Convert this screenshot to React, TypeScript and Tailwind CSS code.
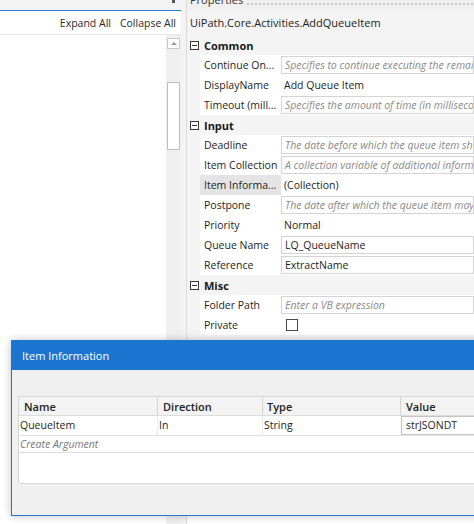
import React from "react";

type Row =
  | { kind: "cat"; label: string }
  | { kind: "prop"; label: string; value?: string; placeholder?: string; box?: boolean; selected?: boolean; check?: boolean };

const rows: Row[] = [
  { kind: "cat", label: "Common" },
  { kind: "prop", label: "Continue On...", placeholder: "Specifies to continue executing the remaining activities", box: true },
  { kind: "prop", label: "DisplayName", value: "Add Queue Item" },
  { kind: "prop", label: "Timeout (mill...", placeholder: "Specifies the amount of time (in milliseconds)", box: true },
  { kind: "cat", label: "Input" },
  { kind: "prop", label: "Deadline", placeholder: "The date before which the queue item should be", box: true },
  { kind: "prop", label: "Item Collection", placeholder: "A collection variable of additional information", box: true },
  { kind: "prop", label: "Item Informa...", value: "(Collection)", selected: true },
  { kind: "prop", label: "Postpone", placeholder: "The date after which the queue item may be", box: true },
  { kind: "prop", label: "Priority", value: "Normal" },
  { kind: "prop", label: "Queue Name", value: "LQ_QueueName", box: true },
  { kind: "prop", label: "Reference", value: "ExtractName", box: true },
  { kind: "cat", label: "Misc" },
  { kind: "prop", label: "Folder Path", placeholder: "Enter a VB expression", box: true },
  { kind: "prop", label: "Private", check: true },
];

function MinusBox() {
  return (
    <div className="w-[9px] h-[9px] border border-[#3a3a3a] flex items-center justify-center bg-white">
      <div className="w-[5px] h-[1px] bg-[#3a3a3a]" />
    </div>
  );
}

export default function App() {
  return (
    <div className="relative w-[474px] h-[524px] overflow-hidden bg-white flex font-['Open_Sans',sans-serif] text-[10.5px] text-[#1e1e1e] leading-none">
      {/* Left panel */}
      <div className="w-[181px] flex flex-col">
        <div className="h-[10px] bg-[#f4f4f4] relative">
          <div className="absolute left-[172px] top-0 w-[3px] h-[3px] bg-[#555]" />
        </div>
        <div className="h-[1px] bg-[#2b7bd0]" />
        <div className="h-[24px] flex items-center justify-end gap-[9px] pr-[5px] pt-[2px] border-b border-[#e6e6e6] text-[#2a2a2a]">
          <span>Expand All</span>
          <span>Collapse All</span>
        </div>
        <div className="flex-1 flex">
          <div className="flex-1 bg-white" />
          <div className="w-[15px] bg-[#f0f0f0] flex flex-col items-center pt-[3px]">
            <div className="w-[13px] h-[11px] bg-white border border-[#c9c9c9] flex items-center justify-center">
              <div className="w-0 h-0 border-l-[3px] border-r-[3px] border-b-[3px] border-l-transparent border-r-transparent border-b-[#9a9a9a]" />
            </div>
            <div className="mt-[33px] w-[13px] h-[68px] bg-white border border-[#bdbdbd]" />
          </div>
        </div>
      </div>

      {/* Splitter */}
      <div className="w-[6px] bg-[#f3f3f3] border-r border-[#dcdcdc]" />

      {/* Properties panel */}
      <div className="flex-1 flex flex-col bg-[#f4f4f4] min-w-0">
        <div className="h-[10px] overflow-hidden relative bg-[#f0f0f0]">
          <div className="absolute left-[3px] top-[-6px] flex items-center w-full">
            <span className="text-[11px] text-[#333]">Properties</span>
            <div className="flex-1 ml-[4px] mt-[8px] border-t-2 border-dotted border-[#c8c8c8]" />
          </div>
        </div>
        <div className="h-[25px] flex items-center pl-[3px] text-[11px] text-[#222]">UiPath.Core.Activities.AddQueueItem</div>
        {rows.map((r, i) =>
          r.kind === "cat" ? (
            <div key={i} className="h-[20px] flex items-center pl-[3px]">
              <MinusBox />
              <span className="ml-[5px] font-bold text-[11px] text-[#1a1a1a]">{r.label}</span>
            </div>
          ) : (
            <div key={i} className="h-[20px] flex">
              <div className="w-[13px]" />
              <div className={`w-[81px] flex items-center pl-[4px] whitespace-nowrap overflow-hidden ${r.selected ? "bg-[#e4e4e4]" : "bg-white"}`}>
                {r.label}
              </div>
              <div className="flex-1 bg-white flex items-center min-w-0">
                {r.box ? (
                  <div className="flex-1 h-[18px] border border-[#d4d4d4] bg-white flex items-center pl-[3px] whitespace-nowrap overflow-hidden">
                    {r.placeholder ? <span className="italic text-[#8a8a8a]">{r.placeholder}</span> : <span>{r.value}</span>}
                  </div>
                ) : r.check ? (
                  <div className="ml-[5px] w-[12px] h-[12px] border border-[#4a4a4a] bg-white" />
                ) : (
                  <span className="pl-[3px] whitespace-nowrap">{r.value}</span>
                )}
              </div>
            </div>
          )
        )}
        <div className="h-[6px]" />
        <div className="flex-1 bg-white" />
      </div>

      {/* Modal dialog */}
      <div className="absolute left-[11px] top-[340px] w-[480px] h-[176px] border border-[#1f78d1] bg-[#f0f0f0] shadow-[0_0_8px_rgba(0,0,0,0.25)] flex flex-col">
        <div className="h-[29px] bg-[#1b75d0] flex items-center pl-[10px] text-white text-[11px]">Item Information</div>
        <div className="pt-[26px] pl-[6px]">
          <div className="w-[480px] border border-[#d6d6d6] bg-white">
            <div className="h-[19px] flex bg-[#f3f3f3] border-b border-[#dcdcdc] font-semibold text-[11px] text-[#222]">
              <div className="w-[139px] border-r border-[#d6d6d6] flex items-center pl-[5px]">Name</div>
              <div className="w-[105px] border-r border-[#d6d6d6] flex items-center pl-[5px]">Direction</div>
              <div className="w-[138px] border-r border-[#d6d6d6] flex items-center pl-[4px]">Type</div>
              <div className="flex-1 flex items-center pl-[5px]">Value</div>
            </div>
            <div className="h-[20px] flex border-b border-[#e2e2e2]">
              <div className="w-[139px] border-r border-[#ececec] flex items-center pl-[1px]">QueueItem</div>
              <div className="w-[105px] border-r border-[#ececec] flex items-center pl-[1px]">In</div>
              <div className="w-[138px] flex items-center pl-[1px]">String</div>
              <div className="flex-1 border border-[#c4c4c4] flex items-center pl-[4px]">strJSONDT</div>
            </div>
            <div className="h-[17px] flex items-center pl-[1px] italic text-[#7a7a7a] border-b border-[#dcdcdc]">Create Argument</div>
            <div className="h-[30px]" />
          </div>
        </div>
      </div>
    </div>
  );
}
